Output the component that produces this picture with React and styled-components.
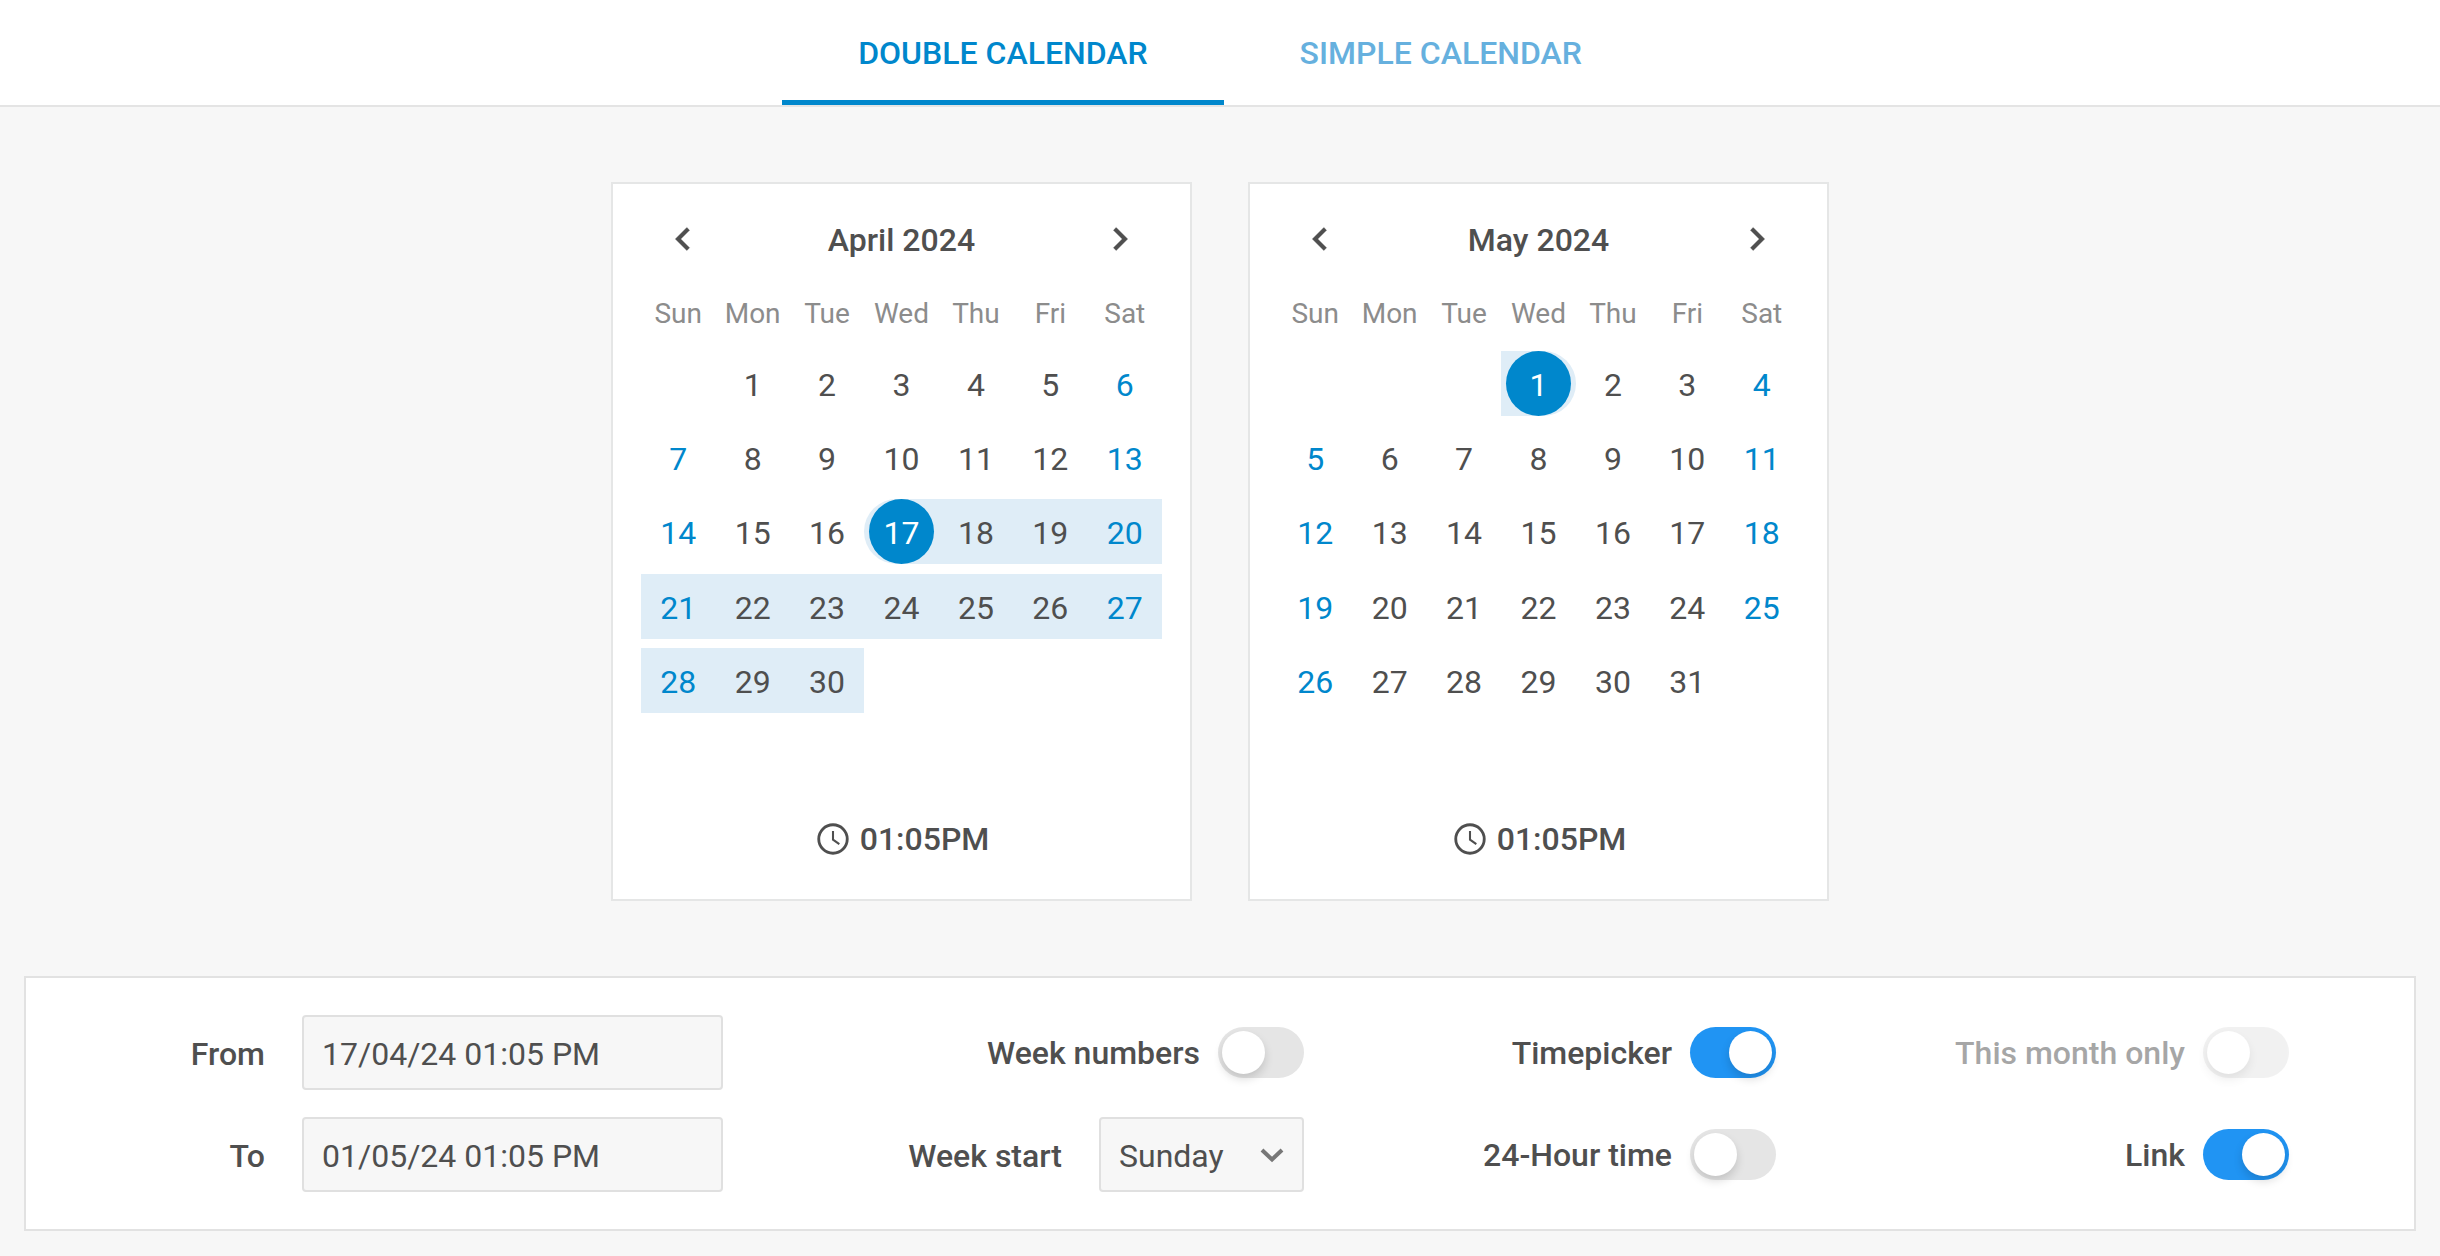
import { useState } from "react";
import styled, { createGlobalStyle, css } from "styled-components";

const weekDays = ["Sun", "Mon", "Tue", "Wed", "Thu", "Fri", "Sat"];

const getDays = (offset, count) => [
  ...Array(offset).fill(null),
  ...Array.from({ length: count }, (_, i) => i + 1),
];

const getWeeks = (offset, count) => {
  const days = getDays(offset, count);
  const weeks = [];
  for (let i = 0; i < days.length; i += 7) {
    weeks.push(days.slice(i, i + 7));
  }
  return weeks;
};

function Calendar({ title, offset, count, start, end, rangeFrom, rangeTo }) {
  return (
    <Card>
      <CardHeader>
        <ArrowButton aria-label="Previous month">
          <svg viewBox="0 0 24 24" width="46" height="46">
            <path d="M15.41 7.41 14 6l-6 6 6 6 1.41-1.41L10.83 12z" />
          </svg>
        </ArrowButton>
        <MonthTitle>{title}</MonthTitle>
        <ArrowButton aria-label="Next month">
          <svg viewBox="0 0 24 24" width="46" height="46">
            <path d="M10 6 8.59 7.41 13.17 12l-4.58 4.59L10 18l6-6z" />
          </svg>
        </ArrowButton>
      </CardHeader>
      <Month>
        <MonthHead>
          <Week>
            {weekDays.map((day) => (
              <WeekDay key={day}>{day}</WeekDay>
            ))}
          </Week>
        </MonthHead>
        <Weeks>
          {getWeeks(offset, count).map((week, index) => (
            <Week key={index}>
              {week.map((day, i) => (
                <Cell
                  key={i}
                  $inRange={day && day >= rangeFrom && day <= rangeTo}
                  $start={day && day === start}
                  $end={day && day === end}
                >
                  {day && (
                    <Day
                      $weekend={i === 0 || i === 6}
                      $selected={day === start || day === end}
                    >
                      {day}
                    </Day>
                  )}
                </Cell>
              ))}
            </Week>
          ))}
        </Weeks>
      </Month>
      <TimeButton>
        <svg viewBox="0 0 24 24" width="38" height="38">
          <circle cx="12" cy="12" r="9" strokeWidth="1.8" />
          <path d="M12 7v5.4l4 2.8" strokeWidth="1.3" />
        </svg>
        01:05PM
      </TimeButton>
    </Card>
  );
}

function Toggle({ label, checked, onChange, disabled }) {
  return (
    <ToggleLabel $disabled={disabled}>
      {label}
      <Switch
        type="checkbox"
        role="switch"
        checked={checked}
        onChange={onChange}
        disabled={disabled}
      />
    </ToggleLabel>
  );
}

function App() {
  const [tab, setTab] = useState("double");
  const [weekStart, setWeekStart] = useState("Sunday");
  const [options, setOptions] = useState({
    weekNumbers: false,
    timepicker: true,
    fullTime: false,
    link: true,
  });

  const toggle = (name) => () =>
    setOptions((current) => ({ ...current, [name]: !current[name] }));

  return (
    <>
      <GlobalStyle />
      <Tabs>
        <Tab $active={tab === "double"} onClick={() => setTab("double")}>
          DOUBLE CALENDAR
        </Tab>
        <Tab $active={tab === "simple"} onClick={() => setTab("simple")}>
          SIMPLE CALENDAR
        </Tab>
      </Tabs>
      <Calendars>
        <Calendar
          title="April 2024"
          offset={1}
          count={30}
          start={17}
          rangeFrom={17}
          rangeTo={30}
        />
        <Calendar
          title="May 2024"
          offset={3}
          count={31}
          end={1}
          rangeFrom={1}
          rangeTo={1}
        />
      </Calendars>
      <Options>
        <DateFields>
          <FieldLabel htmlFor="from">From</FieldLabel>
          <TextInput id="from" defaultValue="17/04/24 01:05 PM" />
          <FieldLabel htmlFor="to">To</FieldLabel>
          <TextInput id="to" defaultValue="01/05/24 01:05 PM" />
        </DateFields>
        <OptionColumn>
          <Toggle
            label="Week numbers"
            checked={options.weekNumbers}
            onChange={toggle("weekNumbers")}
          />
          <SelectField>
            <FieldLabel htmlFor="weekStart">Week start</FieldLabel>
            <SelectWrapper>
              <Select
                id="weekStart"
                value={weekStart}
                onChange={(e) => setWeekStart(e.target.value)}
              >
                <option>Sunday</option>
                <option>Monday</option>
              </Select>
              <svg viewBox="0 0 24 16" width="24" height="16">
                <path d="M2 3l10 9.5L22 3" />
              </svg>
            </SelectWrapper>
          </SelectField>
        </OptionColumn>
        <OptionColumn>
          <Toggle
            label="Timepicker"
            checked={options.timepicker}
            onChange={toggle("timepicker")}
          />
          <Toggle
            label="24-Hour time"
            checked={options.fullTime}
            onChange={toggle("fullTime")}
          />
        </OptionColumn>
        <OptionColumn>
          <Toggle label="This month only" checked={false} disabled />
          <Toggle
            label="Link"
            checked={options.link}
            onChange={toggle("link")}
          />
        </OptionColumn>
      </Options>
    </>
  );
}

export default App;

const GlobalStyle = createGlobalStyle`
  * {
    box-sizing: border-box;
  }

  body {
    margin: 0;
    background: #f7f7f7;
    color: #4f4f4f;
    font-family: Roboto, sans-serif;
    font-size: 32px;
    line-height: 38px;
  }

  button,
  input,
  select {
    margin: 0;
    font: inherit;
    color: inherit;
  }

  button {
    padding: 0;
    border: none;
    background: none;
    cursor: pointer;
  }
`;

const Tabs = styled.nav`
  display: flex;
  justify-content: center;
  background: #fff;
  border-bottom: 2px solid #e4e4e4;
`;

const Tab = styled.button`
  height: 105px;
  padding: 6px 76px 0;
  border-bottom: 5px solid ${({ $active }) => ($active ? "#0087cc" : "transparent")};
  color: ${({ $active }) => ($active ? "#0087cc" : "#66b0de")};
  font-weight: 500;
`;

const Calendars = styled.main`
  display: flex;
  justify-content: center;
  flex-wrap: wrap;
  gap: 56px;
  padding: 75px 24px;
`;

const Card = styled.section`
  display: flex;
  flex-direction: column;
  width: 581px;
  padding: 28px;
  background: #fff;
  border: 2px solid #e5e6e6;
`;

const CardHeader = styled.header`
  display: flex;
  align-items: center;
  justify-content: space-between;
  height: 54px;
  padding: 0 19px;
`;

const ArrowButton = styled.button`
  display: flex;

  svg {
    fill: #4f4f4f;
    stroke: #4f4f4f;
    stroke-width: 0.2;
  }
`;

const MonthTitle = styled.h2`
  margin: 0;
  padding-top: 2px;
  font-size: 32px;
  font-weight: 500;
`;

const Month = styled.table`
  display: block;
`;

const MonthHead = styled.thead`
  display: block;
`;

const Weeks = styled.tbody`
  display: grid;
  grid-template-rows: repeat(6, 1fr);
  height: 446px;
`;

const Week = styled.tr`
  display: grid;
  grid-template-columns: repeat(7, 1fr);
  align-items: center;
`;

const WeekDay = styled.th`
  padding: 16px 0 0;
  color: #8c8c8c;
  font-size: 28px;
  font-weight: 400;
  line-height: 64px;
  text-align: center;
`;

const Cell = styled.td`
  display: flex;
  justify-content: center;
  height: 65px;
  padding: 0;
  background: ${({ $inRange }) => ($inRange ? "#dfedf7" : "transparent")};
  ${({ $start }) => $start && css`border-radius: 37px 0 0 37px;`}
  ${({ $end }) => $end && css`border-radius: 0 37px 37px 0;`}
`;

const Day = styled.button`
  width: 65px;
  height: 65px;
  padding-top: 3px;
  border-radius: 50%;
  color: ${({ $weekend }) => ($weekend ? "#0087cc" : "#4f4f4f")};
  ${({ $selected }) =>
    $selected &&
    css`
      background: #0087cc;
      color: #fff;
    `}
`;

const TimeButton = styled.button`
  display: flex;
  align-items: center;
  justify-content: center;
  gap: 8px;
  height: 79px;
  padding-top: 15px;
  font-weight: 500;

  svg {
    fill: none;
    stroke: #4f4f4f;
  }
`;

const Options = styled.section`
  display: grid;
  grid-template-columns: 572px 581fr 472fr 513fr;
  margin: 0 24px 24px;
  padding: 37px 125px;
  background: #fff;
  border: 2px solid #e2e2e2;
`;

const DateFields = styled.div`
  display: grid;
  grid-template-columns: 114px 421px;
  align-items: center;
  gap: 27px 37px;
`;

const OptionColumn = styled.div`
  display: grid;
  grid-template-rows: 75px 75px;
  align-items: center;
  justify-items: end;
  row-gap: 27px;
`;

const FieldLabel = styled.label`
  padding-top: 3px;
  font-weight: 500;
  text-align: right;
`;

const fieldStyle = css`
  width: 100%;
  height: 75px;
  padding: 3px 18px 0;
  background: #f7f7f7;
  border: 2px solid #e0e0e0;
  border-radius: 4px;
  outline: none;
`;

const TextInput = styled.input`
  ${fieldStyle}
`;

const SelectField = styled.div`
  display: flex;
  align-items: center;
  gap: 37px;
`;

const SelectWrapper = styled.div`
  position: relative;
  width: 205px;

  svg {
    position: absolute;
    top: 30px;
    right: 20px;
    fill: none;
    stroke: #777;
    stroke-width: 4;
    pointer-events: none;
  }
`;

const Select = styled.select`
  ${fieldStyle}
  appearance: none;
`;

const ToggleLabel = styled.label`
  display: flex;
  align-items: center;
  gap: 18px;
  font-weight: 500;
  opacity: ${({ $disabled }) => ($disabled ? 0.5 : 1)};
`;

const Switch = styled.input`
  appearance: none;
  display: flex;
  width: 86px;
  height: 51px;
  margin: 0;
  padding: 4px;
  border-radius: 26px;
  background: #e5e5e5;

  &::before {
    content: "";
    width: 43px;
    height: 43px;
    border-radius: 50%;
    background: #fff;
    box-shadow: 0 5px 10px rgba(0, 0, 0, 0.15);
  }

  &:checked {
    justify-content: flex-end;
    background: #2094f3;
  }
`;
